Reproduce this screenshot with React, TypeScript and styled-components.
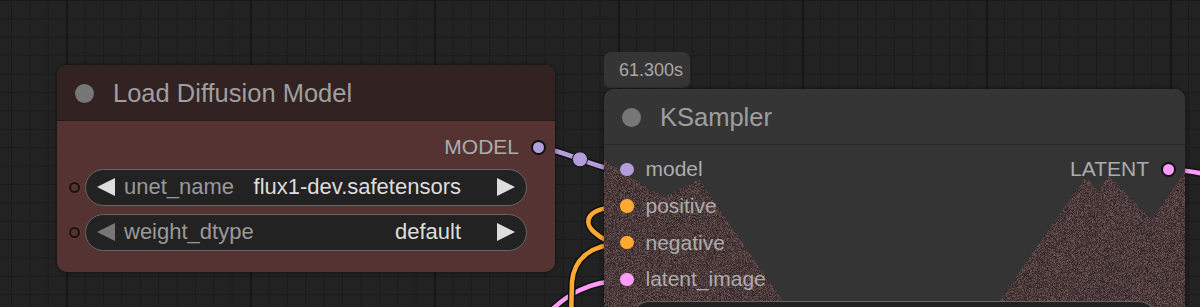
import React from 'react';
import styled, { createGlobalStyle } from 'styled-components';

const GlobalStyle = createGlobalStyle`
  html, body {
    margin: 0;
    padding: 0;
    background: #222;
  }
  body {
    font-family: "Liberation Sans", Arial, sans-serif;
  }
`;

const Canvas = styled.div`
  position: relative;
  width: 1200px;
  height: 307px;
  overflow: hidden;
  background-color: #222;
  background-image:
    linear-gradient(90deg, #161616 2px, transparent 2px),
    linear-gradient(90deg, #1a1a1a 1px, transparent 1px),
    linear-gradient(0deg, #1a1a1a 1px, transparent 1px);
  background-size: 184px 100%, 18.4px 100%, 100% 18.4px;
  background-position: 66px 0, 11px 0, 0 1px;
`;

const Links = styled.svg`
  position: absolute;
  left: 0;
  top: 0;
  z-index: 1;
`;

const Node = styled.div<{ $x: number; $y: number; $w: number; $h: number; $title: string; $bg: string }>`
  position: absolute;
  left: ${(p) => p.$x}px;
  top: ${(p) => p.$y}px;
  width: ${(p) => p.$w}px;
  height: ${(p) => p.$h}px;
  z-index: 2;
  display: flex;
  flex-direction: column;
  border-radius: 10px;
  background: ${(p) => p.$bg};
  box-shadow: 0 0 4px rgba(0, 0, 0, 0.55);
  --title: ${(p) => p.$title};
`;

const TitleBar = styled.div`
  height: 56px;
  flex: none;
  display: flex;
  align-items: center;
  gap: 19px;
  padding: 2px 0 0 18px;
  background: var(--title);
  border-radius: 10px 10px 0 0;
  border-bottom: 1px solid rgba(0, 0, 0, 0.22);
  box-sizing: border-box;
`;

const TitleDot = styled.span`
  width: 19px;
  height: 19px;
  border-radius: 50%;
  background: #777;
`;

const Title = styled.span`
  font-size: 25.5px;
  color: #9f9f9f;
`;

const Body = styled.div<{ $pt: number }>`
  position: relative;
  flex: 1;
  padding-top: ${(p) => p.$pt}px;
  display: flex;
  flex-direction: column;
`;

const SlotRows = styled.div`
  position: relative;
  z-index: 1;
  display: flex;
  justify-content: space-between;
`;

const Column = styled.div<{ $align: string }>`
  display: flex;
  flex-direction: column;
  align-items: ${(p) => p.$align};
`;

const SlotRow = styled.div<{ $out?: boolean }>`
  height: 36.7px;
  display: flex;
  align-items: center;
  flex-direction: ${(p) => (p.$out ? 'row-reverse' : 'row')};
  gap: 12px;
  padding: ${(p) => (p.$out ? '0 9px 0 0' : '0 0 0 16px')};
  font-size: 21px;
  color: #acacac;
`;

const SlotDot = styled.span<{ $c: string; $out?: boolean }>`
  width: ${(p) => (p.$out ? 15 : 13.5)}px;
  height: ${(p) => (p.$out ? 15 : 13.5)}px;
  border-radius: 50%;
  background: ${(p) => p.$c};
  box-sizing: border-box;
  border: ${(p) => (p.$out ? '2.5px solid #111' : 'none')};
  flex: none;
`;

const WidgetRow = styled.div<{ $mt: number }>`
  display: flex;
  align-items: center;
  gap: 5px;
  margin-top: ${(p) => p.$mt}px;
  padding: 0 28px 0 12px;
  position: relative;
  z-index: 1;
`;

const WidgetSlot = styled.span`
  width: 11px;
  height: 11px;
  border-radius: 50%;
  border: 2px solid #1a1212;
  box-sizing: border-box;
  box-shadow: 0 0 2px rgba(140, 90, 60, 0.6);
  flex: none;
`;

const Widget = styled.div`
  flex: 1;
  height: 37px;
  box-sizing: border-box;
  display: flex;
  align-items: center;
  padding: 0 11px;
  background: #222;
  border: 1.5px solid #666;
  border-radius: 19px;
  font-size: 22px;
`;

const Arrow = styled.span<{ $dir: 'l' | 'r'; $dim?: boolean }>`
  width: 0;
  height: 0;
  flex: none;
  border-top: 9px solid transparent;
  border-bottom: 9px solid transparent;
  ${(p) =>
    p.$dir === 'l'
      ? `border-right: 18px solid ${p.$dim ? '#777' : '#ddd'};`
      : `border-left: 18px solid #ddd; margin-left: 36px;`}
`;

const WLabel = styled.span`
  color: #999;
  margin-left: 9px;
  flex: 1;
`;

const WValue = styled.span`
  color: #ddd;
`;

const EmptyWidget = styled.div`
  height: 37px;
  margin: 3px 28px 0 27px;
  box-sizing: border-box;
  background: #222;
  border: 1.5px solid #666;
  border-radius: 19px;
  position: relative;
  z-index: 1;
`;

const Badge = styled.div`
  position: absolute;
  left: 604px;
  top: 52px;
  z-index: 2;
  height: 36px;
  padding: 0 7px 0 15px;
  display: flex;
  align-items: center;
  background: #353535;
  border-radius: 7px;
  font-size: 18px;
  color: #a8a8a8;
`;

const Preview = styled.svg`
  position: absolute;
  left: 0;
  top: 0;
  z-index: 0;
`;

const Link = ({ d, color }: { d: string; color: string }) => (
  <g fill="none" strokeLinecap="round">
    <path d={d} stroke="#111" strokeWidth={7.5} />
    <path d={d} stroke={color} strokeWidth={4.5} />
  </g>
);

const MODEL = '#b39ddb';
const COND = '#ffa931';
const LATENT = '#ff9cf9';

export default function App() {
  return (
    <>
      <GlobalStyle />
      <Canvas>
        <Links width={1200} height={307}>
          <Link d="M538 148 C560 148, 600 170.6, 622 170.6" color={MODEL} />
          <circle cx={580} cy={159.3} r={7.5} fill={MODEL} stroke="#111" strokeWidth={1} />
          <Link d="M1169 170 C1230 170, 1260 200, 1300 240" color={LATENT} />
          <Link d="M622 281 C592 281, 566 292, 540 322" color={LATENT} />
          <Link d="M622 207 C586 207, 583 222, 594 232 S615 244, 622 244" color={COND} />
          <Link d="M622 244 C592 244, 574 258, 572 282 L571 320" color={COND} />
        </Links>

        <Node $x={57} $y={65} $w={498} $h={207} $title="#332222" $bg="#553333">
          <TitleBar>
            <TitleDot />
            <Title>Load Diffusion Model</Title>
          </TitleBar>
          <Body $pt={8}>
            <SlotRows>
              <Column $align="flex-start" />
              <Column $align="flex-end">
                <SlotRow $out>
                  <SlotDot $c={MODEL} $out />
                  <span>MODEL</span>
                </SlotRow>
              </Column>
            </SlotRows>
            <WidgetRow $mt={3}>
              <WidgetSlot />
              <Widget>
                <Arrow $dir="l" />
                <WLabel>unet_name</WLabel>
                <WValue>flux1-dev.safetensors</WValue>
                <Arrow $dir="r" />
              </Widget>
            </WidgetRow>
            <WidgetRow $mt={8}>
              <WidgetSlot />
              <Widget>
                <Arrow $dir="l" $dim />
                <WLabel>weight_dtype</WLabel>
                <WValue>default</WValue>
                <Arrow $dir="r" />
              </Widget>
            </WidgetRow>
          </Body>
        </Node>

        <Badge>61.300s</Badge>

        <Node $x={604} $y={89} $w={581} $h={300} $title="#353535" $bg="#343434">
          <TitleBar>
            <TitleDot />
            <Title>KSampler</Title>
          </TitleBar>
          <Body $pt={6}>
            <Preview width={581} height={244}>
              <defs>
                <filter
                  id="grain"
                  x="0"
                  y="0"
                  width="100%"
                  height="100%"
                  colorInterpolationFilters="sRGB"
                >
                  <feTurbulence type="fractalNoise" baseFrequency="1.4" numOctaves={1} seed={4} result="t" />
                  <feColorMatrix
                    in="t"
                    type="matrix"
                    values="0 0 0 0 0.46  0 0 0 0 0.35  0 0 0 0 0.35  3 0 0 0 -1.1"
                    result="c"
                  />
                  <feComposite in="c" in2="SourceGraphic" operator="in" result="n" />
                  <feMerge>
                    <feMergeNode in="SourceGraphic" />
                    <feMergeNode in="n" />
                  </feMerge>
                </filter>
              </defs>
              <g fill="#2f2526" filter="url(#grain)">
                <polygon points="0,15 33,36 60,52 95,34 183,162 183,250 0,250" />
                <polygon points="391,162 482,31 494,47 505,30 548,75 581,26 581,250 391,250" />
              </g>
            </Preview>
            <SlotRows>
              <Column $align="flex-start">
                <SlotRow>
                  <SlotDot $c={MODEL} />
                  <span>model</span>
                </SlotRow>
                <SlotRow>
                  <SlotDot $c={COND} />
                  <span>positive</span>
                </SlotRow>
                <SlotRow>
                  <SlotDot $c={COND} />
                  <span>negative</span>
                </SlotRow>
                <SlotRow>
                  <SlotDot $c={LATENT} />
                  <span>latent_image</span>
                </SlotRow>
              </Column>
              <Column $align="flex-end">
                <SlotRow $out>
                  <SlotDot $c={LATENT} $out />
                  <span>LATENT</span>
                </SlotRow>
              </Column>
            </SlotRows>
            <EmptyWidget />
          </Body>
        </Node>
      </Canvas>
    </>
  );
}
